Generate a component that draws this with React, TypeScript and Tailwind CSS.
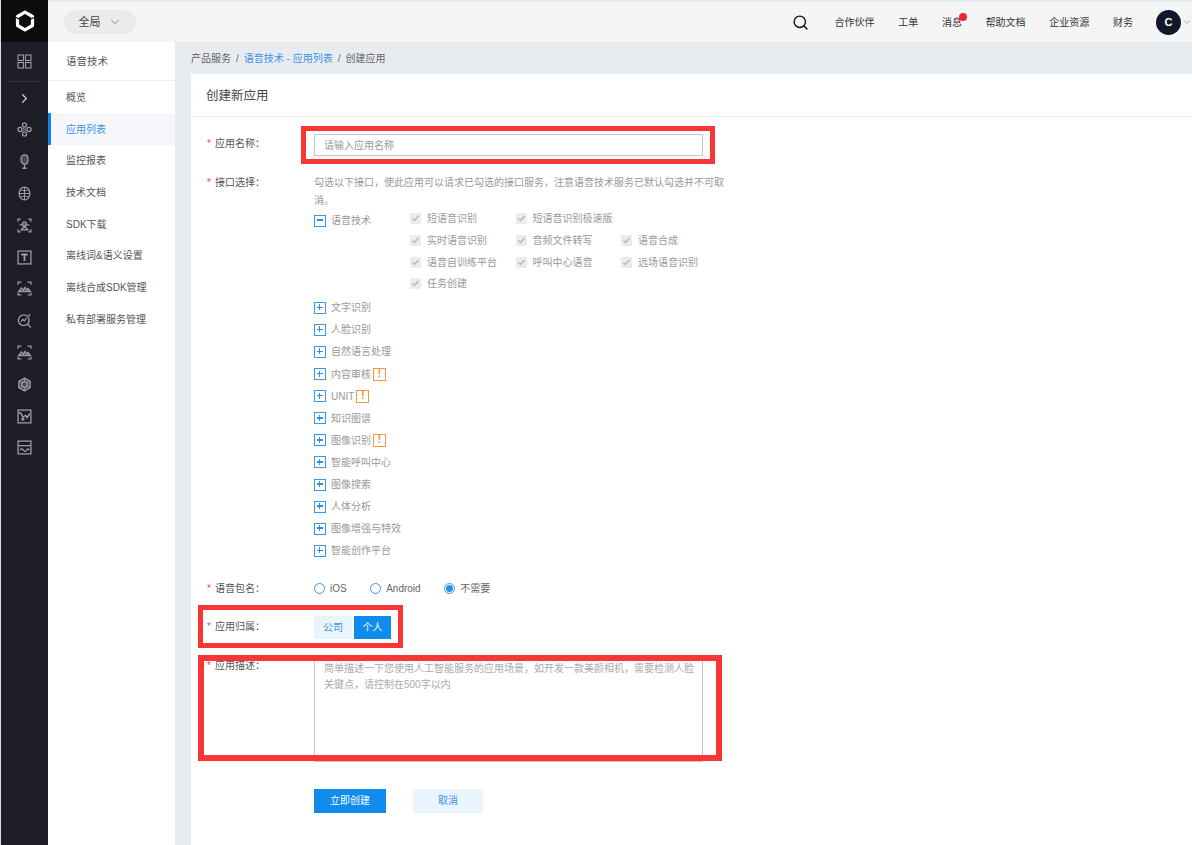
import { ReactNode } from "react";
import { ChevronDown, ChevronRight, Search } from "lucide-react";

const FONT = "font-['Liberation_Sans','Noto_Sans_CJK_SC',sans-serif]";

const sideItems = ["概览", "应用列表", "监控报表", "技术文档", "SDK下载", "离线词&语义设置", "离线合成SDK管理", "私有部署服务管理"];
const navItems = ["合作伙伴", "工单", "消息", "帮助文档", "企业资源", "财务"];
const subRows = [
  ["短语音识别", "短语音识别极速版"],
  ["实时语音识别", "音频文件转写", "语音合成"],
  ["语音自训练平台", "呼叫中心语音", "远场语音识别"],
  ["任务创建"],
];
const groups = [
  { name: "文字识别" },
  { name: "人脸识别" },
  { name: "自然语言处理" },
  { name: "内容审核", warn: true },
  { name: "UNIT", warn: true },
  { name: "知识图谱" },
  { name: "图像识别", warn: true },
  { name: "智能呼叫中心" },
  { name: "图像搜索" },
  { name: "人体分析" },
  { name: "图像增强与特效" },
  { name: "智能创作平台" },
];

function RailIcon({ children }: { children: ReactNode }) {
  return (
    <svg width="15" height="15" viewBox="0 0 14 14" fill="none" stroke="#9c9ea3" strokeWidth="1.2">
      {children}
    </svg>
  );
}

const railIcons: ReactNode[] = [
  <>
    <circle cx="7" cy="2.800" r="1.900" />
    <circle cx="7" cy="11.200" r="1.900" />
    <circle cx="2.800" cy="7" r="1.900" />
    <circle cx="11.200" cy="7" r="1.900" />
    <path d="M5.500 5.500l3 3M8.500 5.500l-3 3" strokeWidth="0.800" />
  </>,
  <>
    <rect x="3.800" y="0.800" width="6.400" height="8.600" rx="3.200" fill="#4a4b53" />
    <path d="M7 9.500v3.800M5 13.300h4" />
  </>,
  <>
    <ellipse cx="7" cy="7" rx="5" ry="6" />
    <path d="M2 7h10M7 1v12M3 3.500c2.500 1.300 5.500 1.300 8 0M3 10.500c2.500-1.300 5.500-1.300 8 0" strokeWidth="0.900" />
  </>,
  <>
    <path d="M1 3.500V1h2.500M10.500 1H13v2.500M13 10.500V13h-2.500M3.500 13H1v-2.500" />
    <circle cx="7" cy="5.500" r="1.800" fill="#4a4b53" />
    <path d="M7 7.500l-3 3.500h6zM2.500 6.500h2.500M9 6.500h2.500" />
  </>,
  <>
    <rect x="1" y="1" width="12" height="12" />
    <path d="M4 4.200h6M7 4.200v6" strokeWidth="1.700" />
  </>,
  <>
    <path d="M1 3.500V1h3M10 1h3v2.500M13 11v2h-3M4 13H1v-2" />
    <path d="M1.500 9.800l2.700-3.300 1.800 1.800 1.500-2.300 1.500 2.300 1.300-1.300 2.200 2.800z" fill="#4a4b53" />
  </>,
  <>
    <circle cx="6.300" cy="6.800" r="5" />
    <path d="M3.700 8l1.800-2 1.300 1.300 2.200-2.500M10 10.500l3 3M11 1l1 2" />
  </>,
  <>
    <path d="M1 3.500V1h3M10 1h3v2.500M13 11v2h-3M4 13H1v-2" />
    <path d="M1.500 9.800l2.700-3.300 1.800 1.800 1.500-2.300 1.500 2.300 1.300-1.300 2.200 2.800z" fill="#4a4b53" />
  </>,
  <>
    <path d="M7 1l5.300 3v6L7 13l-5.300-3V4z" fill="#4a4b53" />
    <circle cx="7" cy="7" r="2.600" />
    <path d="M7 1v3.400M7 9.600V13M1.700 4l3 1.700M9.300 8.300l3 1.700M12.300 4l-3 1.700M4.700 8.300l-3 1.700" strokeWidth="0.800" />
  </>,
  <>
    <rect x="1" y="1" width="12" height="12" />
    <path d="M1 3.800h2.500l2 3.700 2.500-1.500 1.500 2 2.500-4" strokeWidth="1.400" />
    <circle cx="5.500" cy="9.500" r="0.900" />
  </>,
  <>
    <rect x="1" y="1" width="12" height="12" />
    <path d="M1 5.200h12M3 9.500c1-1.500 2-1.500 3 0s2 1.500 3 0 2-1.500 2.500 0" />
  </>,
];

function PlusBox({ minus }: { minus?: boolean }) {
  return (
    <span className="relative size-[12px] shrink-0 border-[1.500px] border-[#3a97ee] bg-white">
      <span className="absolute left-[1.500px] top-[3.750px] h-[1.500px] w-[6px] bg-[#2d8ee8]" />
      {!minus && <span className="absolute left-[3.750px] top-[1.500px] h-[6px] w-[1.500px] bg-[#2d8ee8]" />}
    </span>
  );
}

function Label({ children }: { children: ReactNode }) {
  return (
    <div className="w-[123px] shrink-0 pl-[16px] text-[10px] leading-[16px] text-[#555]">
      <span className="mr-[4px] text-[#f04b4b]">*</span>
      {children}
    </div>
  );
}

function Radio({ label, checked }: { label: string; checked?: boolean }) {
  return (
    <span className="flex items-center gap-[5px]">
      <span className="flex size-[11px] items-center justify-center rounded-full border border-[#3a97ee] bg-white">
        {checked && <span className="size-[7px] rounded-full bg-[#2d8ee8]" />}
      </span>
      <span className="text-[10px] text-[#666]">{label}</span>
    </span>
  );
}

export default function App() {
  return (
    <div className={`relative flex h-[845px] w-[1192px] overflow-hidden bg-[#e8ebf0] ${FONT}`}>
      <aside className="flex w-[48px] shrink-0 flex-col items-center border-l border-[#dcdde0] bg-[#1c1d27]">
        <div className="flex h-[42px] w-full items-center justify-center bg-[#0c0c0e]">
          <svg width="20" height="22" viewBox="0 0 20 22" fill="none">
            <path d="M10 2.200l7.500 4.300v9L10 19.800l-7.500-4.300v-9z" stroke="#fff" strokeWidth="3.200" strokeLinejoin="round" />
            <path d="M1 7.500l5 2.500M19 7.500l-5 2.500" stroke="#0c0c0e" strokeWidth="1.300" />
          </svg>
        </div>
        <div className="flex h-[39px] items-center justify-center">
          <svg width="15" height="15" viewBox="0 0 15 15" fill="none" stroke="#9c9ea3" strokeWidth="1.100">
            <rect x="1" y="1" width="5.500" height="5.500" />
            <rect x="8.500" y="1" width="5.500" height="5.500" />
            <rect x="1" y="8.500" width="5.500" height="5.500" />
            <rect x="8.500" y="8.500" width="5.500" height="5.500" />
          </svg>
        </div>
        <div className="h-px w-[32px] bg-[#33353f]" />
        <div className="flex h-[32px] items-center justify-center text-[#c8c9cc]">
          <ChevronRight size={15} strokeWidth={2} />
        </div>
        {railIcons.map((icon, i) => (
          <div key={i} className="flex h-[31.800px] w-full items-center justify-center">
            <RailIcon>{icon}</RailIcon>
          </div>
        ))}
      </aside>

      <div className="flex min-w-0 flex-1 flex-col">
        <header className="mt-[2px] flex h-[40px] shrink-0 items-center bg-[#f5f5f5] pl-[16px]">
          <div className="flex h-[24px] w-[72px] items-center justify-center gap-[7px] rounded-full bg-[#ebebeb] text-[11px] text-[#444]">
            全局
            <ChevronDown size={14} strokeWidth={2} className="text-[#b5b5b5]" />
          </div>
          <div className="ml-auto flex items-center">
            <Search size={17} strokeWidth={2} className="mr-[26px] text-[#111]" />
            <nav className="flex items-center gap-[23.700px] text-[10px] text-[#333]">
              {navItems.map((item) => (
                <span key={item} className="relative">
                  {item}
                  {item === "消息" && (
                    <span className="absolute -right-[5px] -top-[2px] size-[8px] rounded-full bg-[#f0282d]" />
                  )}
                </span>
              ))}
            </nav>
            <span className="ml-[23px] flex size-[25px] items-center justify-center rounded-full bg-[#0f1729] text-[11px] font-semibold text-white">
              C
            </span>
            <ChevronDown size={10} className="ml-[1px] text-[#999]" />
          </div>
        </header>

        <div className="flex min-h-0 flex-1">
          <div className="w-[127px] shrink-0 bg-white">
            <div className="flex h-[39px] items-center border-b border-[#edeff2] pl-[18px] pt-[2px] text-[10.500px] text-[#555]">
              语音技术
            </div>
            <ul className="pt-[0.700px]">
              {sideItems.map((item) => (
                <li
                  key={item}
                  className={
                    item === "应用列表"
                      ? "flex h-[31.700px] items-center border-l-[3px] border-[#1082e8] bg-[#f5f7fb] pl-[15px] text-[10px] text-[#3d93ea]"
                      : "flex h-[31.700px] items-center pl-[18px] text-[10px] text-[#555]"
                  }
                >
                  {item}
                </li>
              ))}
            </ul>
          </div>

          <main className="flex min-w-0 flex-1 flex-col pl-[16px]">
            <div className="flex h-[32px] shrink-0 items-center gap-[5px] text-[10px] text-[#666]">
              <span>产品服务</span>
              <span>/</span>
              <span className="text-[#3d93ea]">语音技术 - 应用列表</span>
              <span>/</span>
              <span>创建应用</span>
            </div>
            <div className="flex-1 bg-white">
              <div className="flex h-[43px] items-center border-b border-[#edeff2] pl-[15px] pt-[2px] text-[12.500px] text-[#444]">
                创建新应用
              </div>

              <div className="flex pt-[17px]">
                <div className="pt-[2px]">
                  <Label>应用名称：</Label>
                </div>
                <input
                  placeholder="请输入应用名称"
                  className="h-[22px] w-[389px] border border-[#c8c8c8] bg-white px-[9px] text-[10px] outline-none placeholder:text-[#999]"
                />
              </div>

              <div className="flex pt-[18px]">
                <div className="pt-[1px]">
                  <Label>接口选择：</Label>
                </div>
                <div className="w-[440px]">
                  <p className="max-w-[415px] text-[10px] leading-[18px] text-[#999]">
                    勾选以下接口，使此应用可以请求已勾选的接口服务，注意语音技术服务已默认勾选并不可取消。
                  </p>
                  <div className="-mt-[2px] flex">
                    <div className="flex h-[25px] w-[96px] items-center gap-[5px] text-[10px] text-[#999]">
                      <PlusBox minus />
                      语音技术
                    </div>
                    <div className="flex flex-col">
                      {subRows.map((row) => (
                        <div key={row[0]} className="flex h-[21.700px] items-center">
                          {row.map((label) => (
                            <div key={label} className="flex w-[105.500px] items-center gap-[6px] text-[10px] text-[#999]">
                              <span className="flex size-[11px] items-center justify-center bg-[#ececec]">
                                <svg width="9" height="9" viewBox="0 0 9 9" fill="none" stroke="#b5b5b5" strokeWidth="1.300">
                                  <path d="M1.500 4.500l2 2 4-4.500" />
                                </svg>
                              </span>
                              {label}
                            </div>
                          ))}
                        </div>
                      ))}
                    </div>
                  </div>
                  <div className="mt-[2px] flex flex-col">
                    {groups.map((group) => (
                      <div key={group.name} className="flex h-[22.100px] items-center gap-[5px] text-[10px] text-[#999]">
                        <PlusBox />
                        <span>{group.name}</span>
                        {group.warn && (
                          <span className="-ml-[3px] flex size-[13px] items-center justify-center border border-[#f39a3c] text-[10px] font-bold leading-none text-[#f08a24]">
                            !
                          </span>
                        )}
                      </div>
                    ))}
                  </div>
                </div>
              </div>

              <div className="flex items-center pt-[19px]">
                <Label>语音包名：</Label>
                <div className="flex items-center gap-[23.500px]">
                  <Radio label="iOS" />
                  <Radio label="Android" />
                  <Radio label="不需要" checked />
                </div>
              </div>

              <div className="flex items-center pt-[19px]">
                <Label>应用归属：</Label>
                <div className="flex gap-[2px] text-[10px]">
                  <span className="flex h-[23px] w-[38px] items-center justify-center bg-[#e9f4fd] text-[#3d93ea]">公司</span>
                  <span className="flex h-[23px] w-[37px] items-center justify-center bg-[#108cee] text-white">个人</span>
                </div>
              </div>

              <div className="flex pt-[19px]">
                <Label>应用描述：</Label>
                <textarea
                  placeholder="简单描述一下您使用人工智能服务的应用场景，如开发一款美颜相机，需要检测人脸关键点，请控制在500字以内"
                  className="h-[104px] w-[389px] resize-none border border-[#c8c8c8] bg-white py-[2px] pl-[9px] pr-[2px] text-[10px] leading-[16px] outline-none placeholder:text-[#aaa]"
                />
              </div>

              <div className="ml-[123px] flex gap-[27px] pt-[27px] text-[10px]">
                <button className="h-[24px] w-[72px] bg-[#108cee] text-white">立即创建</button>
                <button className="h-[24px] w-[70px] bg-[#e9f4fd] text-[#3d93ea]">取消</button>
              </div>
            </div>
          </main>
        </div>
      </div>

      {/* hand-drawn red annotations on top of the screenshot */}
      <div className="absolute left-[301px] top-[126px] h-[38px] w-[414px] border-[5px] border-[#f93535]" />
      <div className="absolute left-[198px] top-[605px] h-[43px] w-[205px] border-[5px] border-[#f93535]" />
      <div className="absolute left-[198px] top-[655px] h-[106px] w-[524px] border-[6px] border-[#f93535]" />
    </div>
  );
}
